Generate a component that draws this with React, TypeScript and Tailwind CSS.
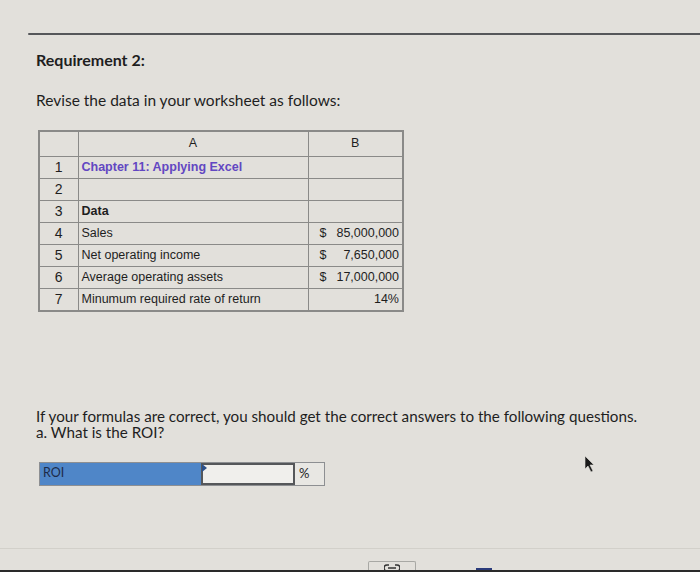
const rows: { n: number; a: string; b: string; kind?: "title" | "bold" | "money" | "pct" }[] = [
  { n: 1, a: "Chapter 11: Applying Excel", b: "", kind: "title" },
  { n: 2, a: "", b: "" },
  { n: 3, a: "Data", b: "", kind: "bold" },
  { n: 4, a: "Sales", b: "85,000,000", kind: "money" },
  { n: 5, a: "Net operating income", b: "7,650,000", kind: "money" },
  { n: 6, a: "Average operating assets", b: "17,000,000", kind: "money" },
  { n: 7, a: "Minumum required rate of return", b: "14%", kind: "pct" },
];

export default function App() {
  return (
    <div className="relative w-[700px] h-[572px] overflow-hidden bg-[#e2e0db] text-[#1e1e1e] font-['Lato',sans-serif]">
      <div className="pt-[33px] pl-[28px]">
        <div className="h-[2px] bg-[#55575a] rounded-l" />
      </div>

      <div className="pl-[36px]">
        <h2 className="mt-[15px] text-[16px] font-bold leading-5">Requirement 2:</h2>
        <p className="mt-[20px] text-[15.5px] leading-5">Revise the data in your worksheet as follows:</p>
      </div>

      <table className="ml-[38px] mt-[20px] border-collapse border-2 border-[#8a8a88] font-['Liberation_Sans',Arial,sans-serif] text-[12.5px]">
        <thead>
          <tr className="h-[25px]">
            <th className="w-[39px] border border-[#8a8a88]" />
            <th className="w-[230px] border border-[#8a8a88] font-normal text-center">A</th>
            <th className="w-[95px] border border-[#8a8a88] font-normal text-center">B</th>
          </tr>
        </thead>
        <tbody>
          {rows.map((r) => (
            <tr key={r.n} className="h-[22px]">
              <td className="border border-[#8a8a88] text-center text-[14px]">{r.n}</td>
              <td
                className={
                  "border border-[#8a8a88] px-[3px] " +
                  (r.kind === "title" ? "font-bold text-[#6247c2]" : r.kind === "bold" ? "font-bold" : "")
                }
              >
                {r.a}
              </td>
              <td className="border border-[#8a8a88] px-[3px]">
                {r.kind === "money" ? (
                  <div className="flex justify-between pl-[8px]">
                    <span>$</span>
                    <span>{r.b}</span>
                  </div>
                ) : r.kind === "pct" ? (
                  <div className="text-right">{r.b}</div>
                ) : null}
              </td>
            </tr>
          ))}
        </tbody>
      </table>

      <div className="pl-[36px] mt-[96px] text-[15.2px] leading-[16px]">
        <p>If your formulas are correct, you should get the correct answers to the following questions.</p>
        <p>a. What is the ROI?</p>
      </div>

      <div className="ml-[39px] mt-[22px] flex h-[24px] w-[286px] border border-[#8d8f92] text-[12.5px]">
        <div className="w-[161px] bg-[#4f86c8] pl-[3px] flex items-center text-[#1d2b48]">ROI</div>
        <div className="relative w-[94px] bg-[#f0efec] border-2 border-[#55575a]">
          <span className="absolute -left-[1px] -top-[1px] h-0 w-0 border-t-[4px] border-b-[4px] border-l-[5px] border-t-transparent border-b-transparent border-l-[#2b4f8a]" />
        </div>
        <div className="flex-1 bg-[#e8e7e3] pl-[4px] flex items-center text-[13px]">%</div>
      </div>

      <svg className="absolute left-[583px] top-[455px]" width="14" height="18" viewBox="0 0 14 18">
        <path d="M2 1 L2 14 L5 11 L8 17 L10 16 L7 10 L11 10 Z" fill="#1a1a1a" stroke="#e2e0db" strokeWidth="0.6" />
      </svg>

      <div className="absolute left-0 right-0 top-[548px] h-px bg-[#d2d0ca]" />
      <div className="absolute left-[368px] top-[561px] w-[48px] h-[12px] border-t border-x border-[#a8a8a4] rounded-t-[2px] flex justify-center">
        <svg width="16" height="10" viewBox="0 0 16 10" className="mt-[1px]">
          <path d="M5 2 H3 a3 3 0 0 0 0 6 H5 M11 2 H13 a3 3 0 0 1 0 6 H11 M4 5 H12" fill="none" stroke="#333" strokeWidth="1.5" />
        </svg>
      </div>
      <div className="absolute left-[476px] top-[568px] w-[16px] h-[3px] bg-[#2a3b7a]" />
      <div className="absolute left-0 right-0 bottom-0 h-[2px] bg-[#2a2a2a]" />
    </div>
  );
}
